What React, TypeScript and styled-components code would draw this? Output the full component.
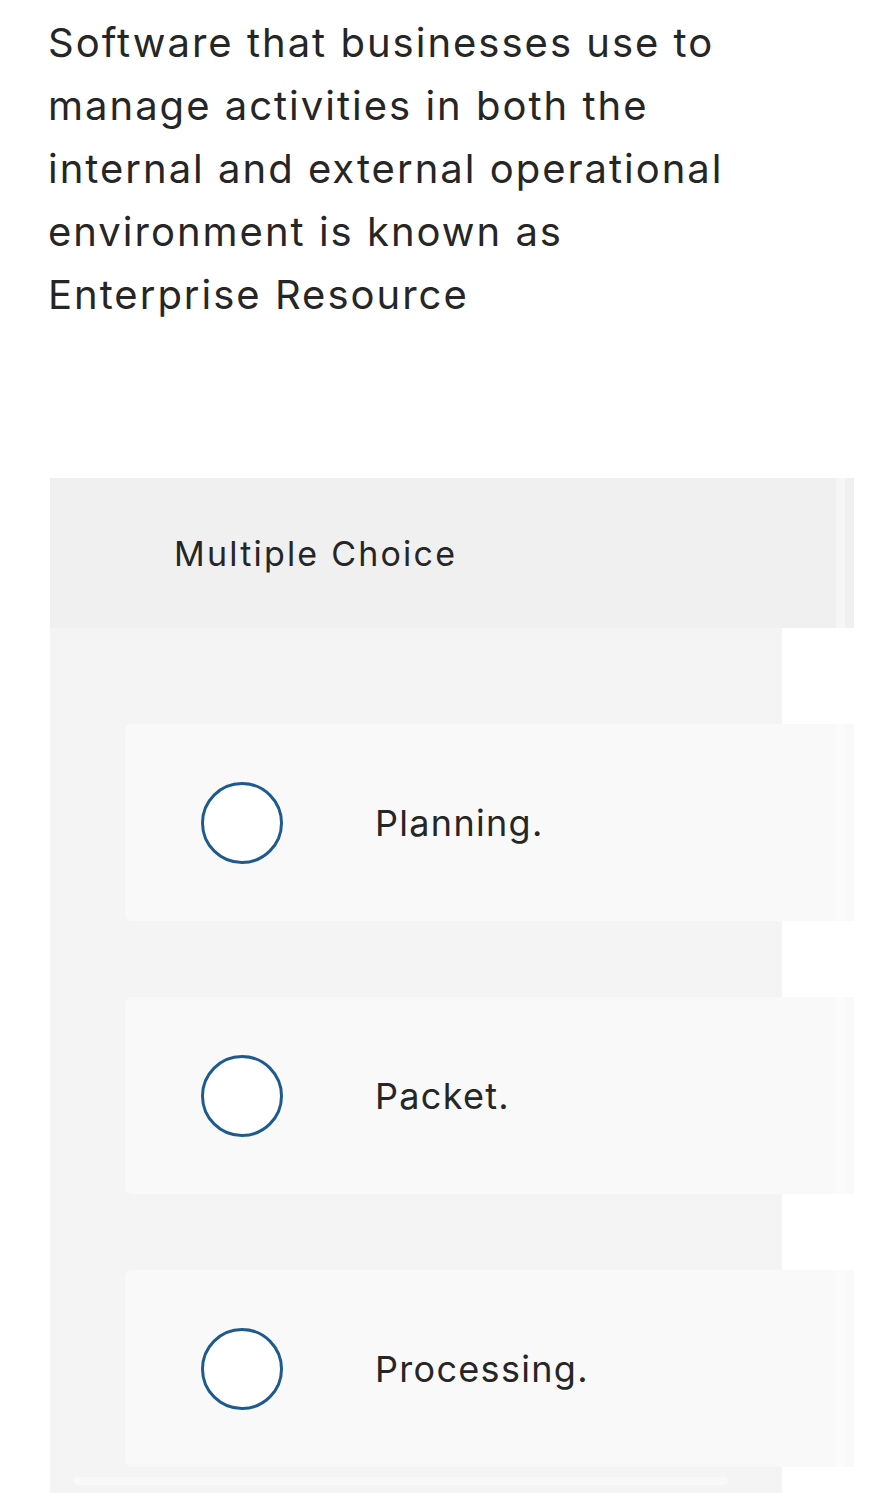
import React from 'react'
import styled, { createGlobalStyle } from 'styled-components'

const GlobalStyle = createGlobalStyle`
  body {
    margin: 0;
    background: #ffffff;
    font-family: Inter, "Open Sans", sans-serif;
    color: #262626;
  }
`

const Page = styled.div`
  width: 871px;
  height: 1493px;
  overflow: hidden;
`

// 問題文
const Question = styled.p`
  margin: 0;
  padding: 11px 0 0 48px;
  width: 750px;
  font-size: 40px;
  letter-spacing: 2px;
  line-height: 63px;
  height: 478px;
  box-sizing: border-box;
`

const Quiz = styled.section`
  margin-left: 50px;
  width: 804px;
`

const QuizHeader = styled.div`
  height: 150px;
  display: flex;
  align-items: center;
  padding-left: 124px;
  font-size: 34px;
  letter-spacing: 2.2px;
  background: linear-gradient(
    to right,
    #f0f0f0 0,
    #f0f0f0 786px,
    #f6f6f6 786px,
    #f6f6f6 795px,
    #f0f0f0 795px
  );
`

const QuizBody = styled.div`
  width: 732px;
  background: #f4f4f4;
  padding-top: 96px;
  display: flex;
  flex-direction: column;
  gap: 76px;
  height: 865px;
  box-sizing: border-box;
`

const Option = styled.label`
  margin-left: 75px;
  width: 729px;
  height: 197px;
  flex-shrink: 0;
  display: flex;
  align-items: center;
  padding-left: 76px;
  box-sizing: border-box;
  border-radius: 7px 0 0 7px;
  background: linear-gradient(
    to right,
    #f9f9f9 0,
    #f9f9f9 711px,
    #fbfbfb 711px,
    #fbfbfb 720px,
    #f9f9f9 720px
  );
  cursor: pointer;
`

const Radio = styled.span`
  width: 82px;
  height: 82px;
  box-sizing: border-box;
  border-radius: 50%;
  border: 3px solid #1d5a8e;
  background: #ffffff;
  flex-shrink: 0;
`

const OptionText = styled.span`
  margin-left: 92px;
  font-size: 36px;
  letter-spacing: 1.3px;
`

const BottomBar = styled.div`
  margin: -66px 0 0 24px;
  width: 654px;
  height: 8px;
  border-radius: 4px;
  background: #f9f9f9;
`

const options = ['Planning.', 'Packet.', 'Processing.']

export default function App() {
  return (
    <Page>
      <GlobalStyle />
      <Question>
        Software that businesses use to manage activities in both the internal
        and external operational environment is known as Enterprise Resource
      </Question>
      <Quiz>
        <QuizHeader>Multiple Choice</QuizHeader>
        <QuizBody>
          {options.map((o) => (
            <Option key={o}>
              <Radio />
              <OptionText>{o}</OptionText>
            </Option>
          ))}
          <BottomBar />
        </QuizBody>
      </Quiz>
    </Page>
  )
}
